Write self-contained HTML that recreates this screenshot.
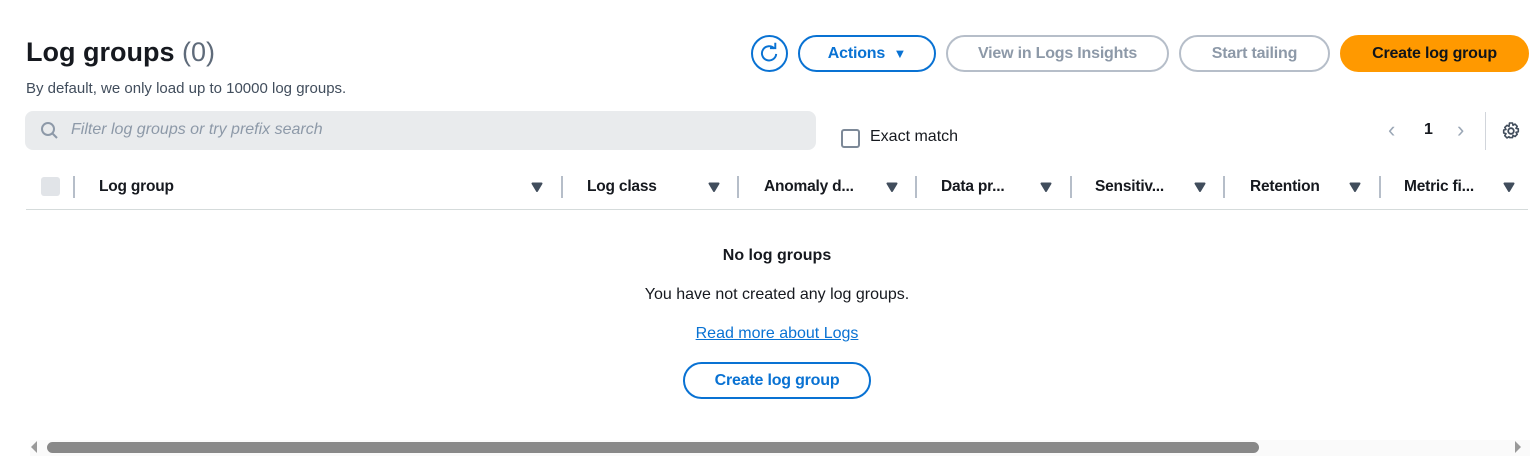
<!DOCTYPE html>
<html><head><meta charset="utf-8"><style>
body{margin:0;width:1536px;height:466px;background:#fff;font-family:"Liberation Sans",sans-serif;color:#16191f;position:relative;overflow:hidden}
.a{position:absolute;white-space:nowrap}
.btn{position:absolute;box-sizing:border-box;height:37px;top:35px;border-radius:19px;border:2px solid;font-weight:bold;font-size:16px;display:flex;align-items:center;justify-content:center;letter-spacing:-0.2px}
.hd{position:absolute;top:178px;font-size:15.5px;font-weight:bold;color:#16191f;letter-spacing:-0.2px}
.dv{position:absolute;top:176px;width:2px;height:22px;background:#b6bec9}
.tri{position:absolute;top:182px}
</style></head><body>
<div class="a" style="left:26px;top:37px;font-size:27px;font-weight:bold">Log groups <span style="font-weight:normal;color:#5f6b7a">(0)</span></div>
<div class="a" style="left:26px;top:80px;font-size:15px;color:#414d5c">By default, we only load up to 10000 log groups.</div>
<div class="a" style="left:25px;top:111px;width:791px;height:39px;background:#e9ebed;border-radius:8px"></div>
<svg class="a" style="left:40px;top:121px" width="20" height="20" viewBox="0 0 20 20"><circle cx="8" cy="8" r="6" fill="none" stroke="#8d99a8" stroke-width="2"/><path d="M12.5 12.5L17 17" stroke="#8d99a8" stroke-width="2"/></svg>
<div class="a" style="left:71px;top:121px;font-size:16px;font-style:italic;color:#8d99a8">Filter log groups or try prefix search</div>
<div class="a" style="left:841px;top:129px;width:15px;height:15px;border:2px solid #7d8998;border-radius:3px"></div>
<div class="a" style="left:870px;top:128px;font-size:16px;color:#16191f">Exact match</div>
<svg class="btn" style="left:751px;width:37px;border-color:#0972d3;padding:0" viewBox="0 0 37 37"><path d="M24 13A8 8 0 1 0 26 19" fill="none" stroke="#0972d3" stroke-width="2.2"/><path d="M19 12.5h6v-6" fill="none" stroke="#0972d3" stroke-width="2.2"/></svg>
<div class="btn" style="left:798px;width:138px;border-color:#0972d3;color:#0972d3">Actions&nbsp;&nbsp;<span style="font-size:13px">▼</span></div>
<div class="btn" style="left:946px;width:223px;border-color:#b6bec9;color:#8d99a8">View in Logs Insights</div>
<div class="btn" style="left:1179px;width:151px;border-color:#b6bec9;color:#8d99a8">Start tailing</div>
<div class="btn" style="left:1340px;width:189px;border-color:#ff9900;background:#ff9900;color:#0f141a">Create log group</div>
<div class="a" style="left:1388px;top:117px;font-size:22px;color:#9ba7b6">‹</div>
<div class="a" style="left:1424px;top:121px;font-size:16px;font-weight:bold">1</div>
<div class="a" style="left:1457px;top:117px;font-size:22px;color:#9ba7b6">›</div>
<div class="a" style="left:1485px;top:112px;width:1px;height:38px;background:#d1d5db"></div>
<svg class="a" style="left:1501px;top:121px" width="20" height="20" viewBox="0 0 20 20"><circle cx="10" cy="10" r="2.8" fill="none" stroke="#414d5c" stroke-width="1.8"/><path d="M8.5 2h3l.5 2.3 2-1.2 2.2 2.2-1.2 2 2.3.5v3l-2.3.5 1.2 2-2.2 2.2-2-1.2-.5 2.3h-3L8 15.7 6 16.9 3.8 14.7l1.2-2L2.7 12V9l2.3-.5-1.2-2L6 4.3l2 1.2z" fill="none" stroke="#414d5c" stroke-width="1.6" stroke-linejoin="round"/></svg>
<div class="a" style="left:41px;top:177px;width:19px;height:19px;background:#e1e4e8;border-radius:3px"></div>
<div class="dv" style="left:73px"></div>
<div class="hd" style="left:99px">Log group</div>
<div class="dv" style="left:561px"></div>
<div class="hd" style="left:587px">Log class</div>
<div class="dv" style="left:737px"></div>
<div class="hd" style="left:764px">Anomaly d...</div>
<div class="dv" style="left:915px"></div>
<div class="hd" style="left:941px">Data pr...</div>
<div class="dv" style="left:1070px"></div>
<div class="hd" style="left:1095px">Sensitiv...</div>
<div class="dv" style="left:1223px"></div>
<div class="hd" style="left:1250px">Retention</div>
<div class="dv" style="left:1379px"></div>
<div class="hd" style="left:1404px">Metric fi...</div>
<svg width="0" height="0" style="position:absolute"><defs><path id="t" d="M1.5 1.5h9L6 9z" fill="#414d5c" stroke="#414d5c" stroke-width="2" stroke-linejoin="round"/></defs></svg>
<svg class="tri" style="left:531px" width="12" height="11"><use href="#t"/></svg>
<svg class="tri" style="left:708px" width="12" height="11"><use href="#t"/></svg>
<svg class="tri" style="left:886px" width="12" height="11"><use href="#t"/></svg>
<svg class="tri" style="left:1040px" width="12" height="11"><use href="#t"/></svg>
<svg class="tri" style="left:1194px" width="12" height="11"><use href="#t"/></svg>
<svg class="tri" style="left:1349px" width="12" height="11"><use href="#t"/></svg>
<svg class="tri" style="left:1503px" width="12" height="11"><use href="#t"/></svg>
<div class="a" style="left:26px;top:209px;width:1502px;height:1px;background:#d5dbdb"></div>
<div class="a" style="left:0;width:1554px;top:247px;text-align:center;font-size:16px;font-weight:bold">No log groups</div>
<div class="a" style="left:0;width:1554px;top:286px;text-align:center;font-size:16px">You have not created any log groups.</div>
<div class="a" style="left:0;width:1554px;top:325px;text-align:center;font-size:16px;color:#0972d3;text-decoration:underline">Read more about Logs</div>
<div class="btn" style="left:683px;top:362px;width:188px;border-color:#0972d3;color:#0972d3">Create log group</div>
<div class="a" style="left:30px;top:440px;width:1500px;height:16px;background:#fafafa"></div>
<div class="a" style="left:47px;top:442px;width:1212px;height:11px;background:#888;border-radius:6px"></div>
<div class="a" style="left:31px;top:441px;width:0;height:0;border-top:6px solid transparent;border-bottom:6px solid transparent;border-right:6px solid #999"></div>
<div class="a" style="left:1515px;top:441px;width:0;height:0;border-top:6px solid transparent;border-bottom:6px solid transparent;border-left:6px solid #999"></div>
</body></html>
